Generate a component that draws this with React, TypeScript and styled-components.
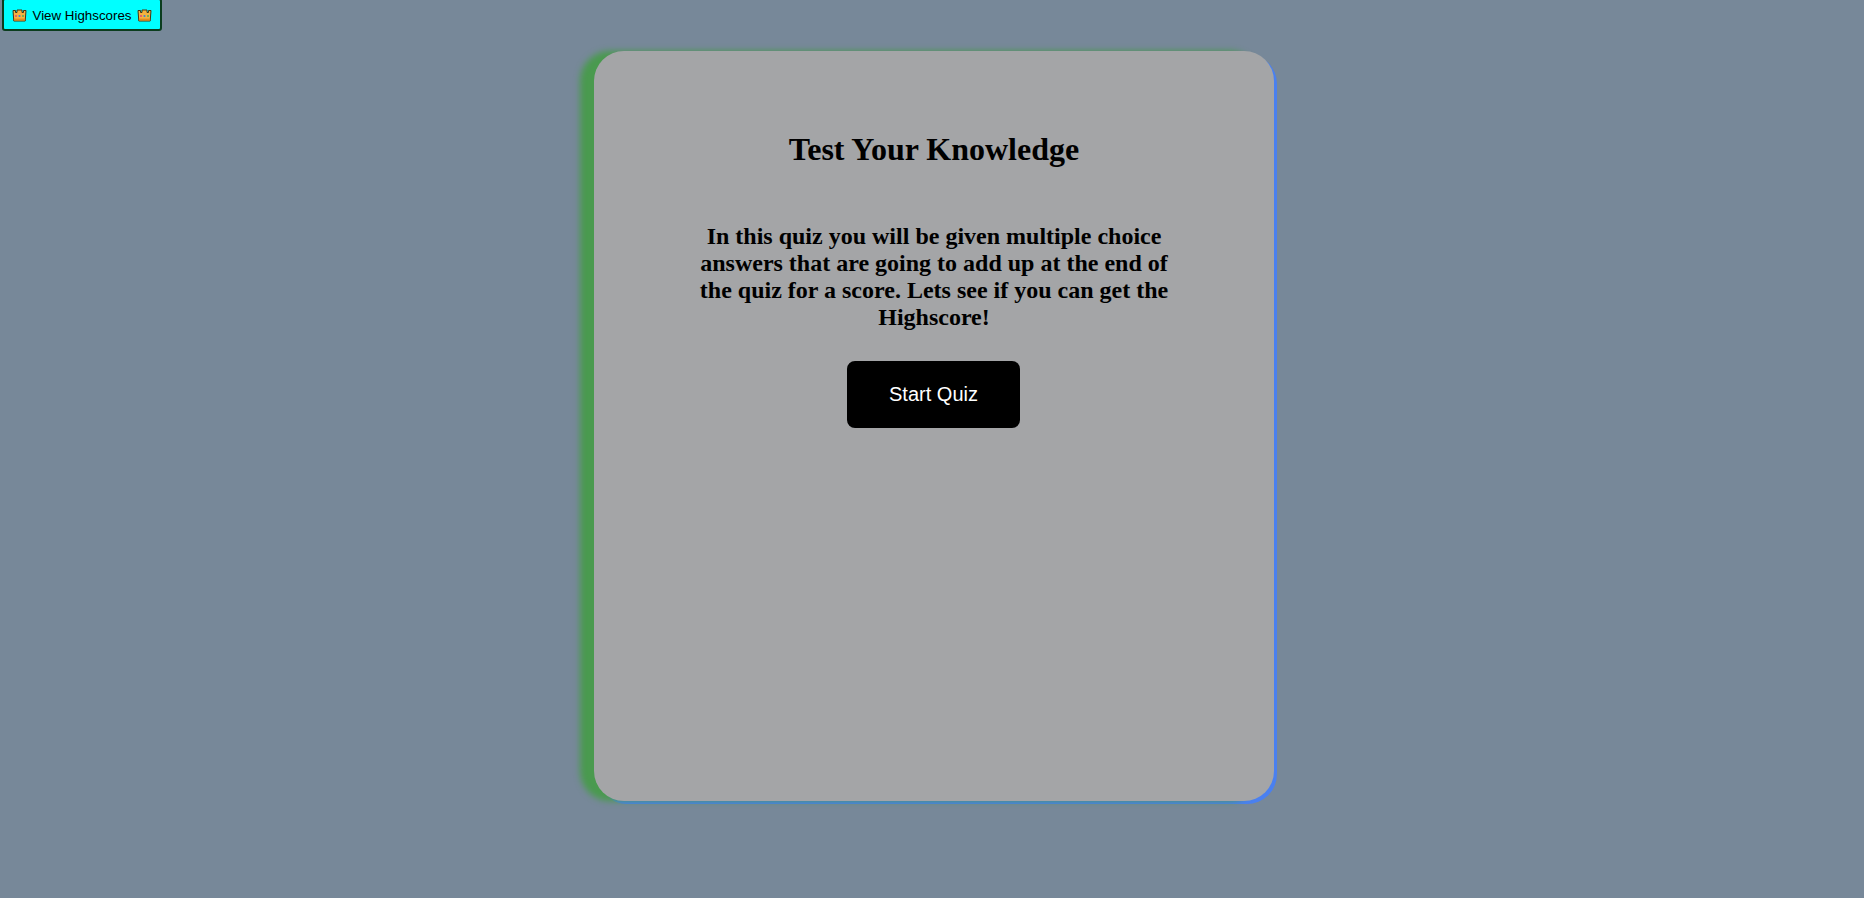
import React from "react";
import styled, { createGlobalStyle } from "styled-components";

const Global = createGlobalStyle`
  html, body { margin: 0; padding: 0; height: 100%; background: #778899; overflow: hidden; }
  body { font-family: "Liberation Serif", serif; }
`;
const Page = styled.div`
  position: relative;
  width: 1864px;
  height: 898px;
  display: flex;
  justify-content: center;
  background: #778899;
`;
const HighscoreButton = styled.button`
  position: absolute;
  left: 2px;
  top: -2px;
  width: 160px;
  height: 33px;
  padding: 2px 0 0;
  display: flex;
  align-items: center;
  justify-content: center;
  gap: 5px;
  background: #00ffff;
  border: 2px solid #0b3d1e;
  border-radius: 3px;
  font: 13.33px "Liberation Sans", sans-serif;
  color: #000;
`;
const CrownIcon = styled.svg`
  width: 15px;
  height: 13px;
  flex: none;
`;
const Card = styled.main`
  box-sizing: border-box;
  margin: 51px 0 0 4px;
  width: 680px;
  height: 750px;
  background: #a4a5a7;
  border-radius: 30px;
  box-shadow: -14px 0 6px #4a9a4f, 3px 3px 0 #4a80f0;
  display: flex;
  flex-direction: column;
  align-items: center;
`;
const Title = styled.h1`
  margin: 80px 0 0;
  font-size: 32px;
  font-weight: bold;
`;
const Intro = styled.h2`
  margin: 55px 0 0;
  width: 480px;
  font-size: 24px;
  line-height: 27px;
  font-weight: bold;
  text-align: center;
`;
const StartButton = styled.button`
  margin: 30px 1px 0 0;
  width: 173px;
  height: 67px;
  background: #000;
  color: #fff;
  border: 0;
  border-radius: 8px;
  font: 20px "Liberation Sans", sans-serif;
`;

function Crown() {
  return (
    <CrownIcon viewBox="0 0 15 13" aria-hidden="true">
      <path
        d="M1 1.5h2.5v2h1.5v-2.5h5v2.500h1.500v-2h2.500l-.8 10.500h-11.400z"
        fill="#f4b23f"
        stroke="#4a3210"
        strokeWidth="1"
        strokeLinejoin="round"
      />
      <rect x="2" y="9.600" width="11" height="1.900" fill="#e08a1e" />
      <circle cx="4" cy="7" r="1" fill="#e0457b" />
      <circle cx="7.500" cy="7" r="1.100" fill="#3f7fd8" />
      <circle cx="11" cy="7" r="1" fill="#4fae5a" />
    </CrownIcon>
  );
}

export default function App() {
  return (
    <Page>
      <Global />
      <HighscoreButton>
        <Crown />
        View Highscores
        <Crown />
      </HighscoreButton>
      <Card>
        <Title>Test Your Knowledge</Title>
        <Intro>In this quiz you will be given multiple choice answers that are going to add up at the end of the quiz for a score. Lets see if you can get the Highscore!</Intro>
        <StartButton>Start Quiz</StartButton>
      </Card>
    </Page>
  );
}
